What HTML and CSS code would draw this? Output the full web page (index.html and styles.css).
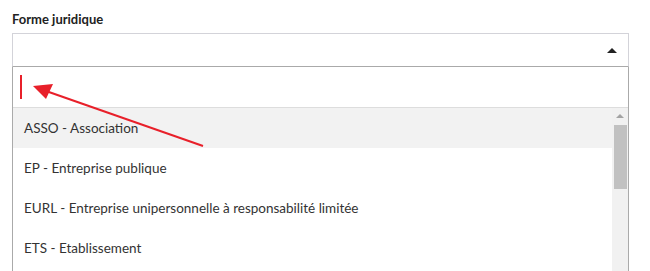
FILE: index.html
```html
<!DOCTYPE html>
<html lang="fr">
<head>
<meta charset="utf-8">
<link rel="stylesheet" href="styles.css">
</head>
<body>
<div class="field">
  <label class="label">Forme juridique</label>
  <div class="select">
    <span class="caret"></span>
  </div>
  <div class="dropdown">
    <div class="search"><span class="cursor"></span></div>
    <div class="list">
      <ul class="options">
        <li class="option active">ASSO - Association</li>
        <li class="option">EP - Entreprise publique</li>
        <li class="option">EURL - Entreprise unipersonnelle à responsabilité limitée</li>
        <li class="option">ETS - Etablissement</li>
      </ul>
      <div class="scrollbar">
        <span class="sb-up"></span>
        <span class="sb-thumb"></span>
      </div>
    </div>
  </div>
</div>
<svg class="annotation" width="650" height="271" viewBox="0 0 650 271">
  <line x1="203" y1="146" x2="46" y2="91" stroke="#e8202a" stroke-width="2"/>
  <polygon points="33,86 53,84 46,99" fill="#e8202a"/>
</svg>
</body>
</html>
```
FILE: styles.css
```css
html, body {
  margin: 0;
  padding: 0;
  background: #fff;
  height: 271px;
  overflow: hidden;
}
body {
  font-family: Lato, "Noto Sans", sans-serif;
  color: #333;
  position: relative;
}
.field {
  padding: 11px 0 0 12px;
  width: 617px;
}
.label {
  display: block;
  font-weight: bold;
  font-size: 13px;
  line-height: 16px;
  color: #222;
  margin-bottom: 6px;
}
.select {
  height: 32px;
  border: 1px solid #d3d3d9;
  border-bottom: 1px solid #aaa;
  display: flex;
  align-items: center;
  justify-content: flex-end;
  padding-right: 11px;
}
.caret {
  width: 0;
  height: 0;
  border-left: 5px solid transparent;
  border-right: 5px solid transparent;
  border-bottom: 5px solid #222;
}
.dropdown {
  border-left: 1px solid #aaa;
  border-right: 1px solid #aaa;
}
.search {
  height: 40px;
  border-bottom: 1px solid #ddd;
  display: flex;
  align-items: center;
  padding-left: 7px;
}
.cursor {
  width: 2px;
  height: 24px;
  background: #e8202a;
}
.list {
  display: flex;
}
.options {
  list-style: none;
  margin: 0;
  padding: 0;
  flex: 1;
}
.option {
  height: 40px;
  line-height: 40px;
  padding-left: 11px;
  font-size: 13.5px;
  color: #333;
  white-space: nowrap;
}
.option.active {
  background: #f2f2f2;
}
.scrollbar {
  width: 16px;
  background: #f1f1f1;
  position: relative;
  height: 163px;
}
.sb-up {
  position: absolute;
  left: 4px;
  top: 6px;
  width: 0;
  height: 0;
  border-left: 4px solid transparent;
  border-right: 4px solid transparent;
  border-bottom: 4px solid #a3a3a3;
}
.sb-thumb {
  position: absolute;
  left: 2px;
  top: 17px;
  width: 13px;
  height: 64px;
  background: #c1c1c1;
}
.annotation {
  position: absolute;
  left: 0;
  top: 0;
  pointer-events: none;
}
```
